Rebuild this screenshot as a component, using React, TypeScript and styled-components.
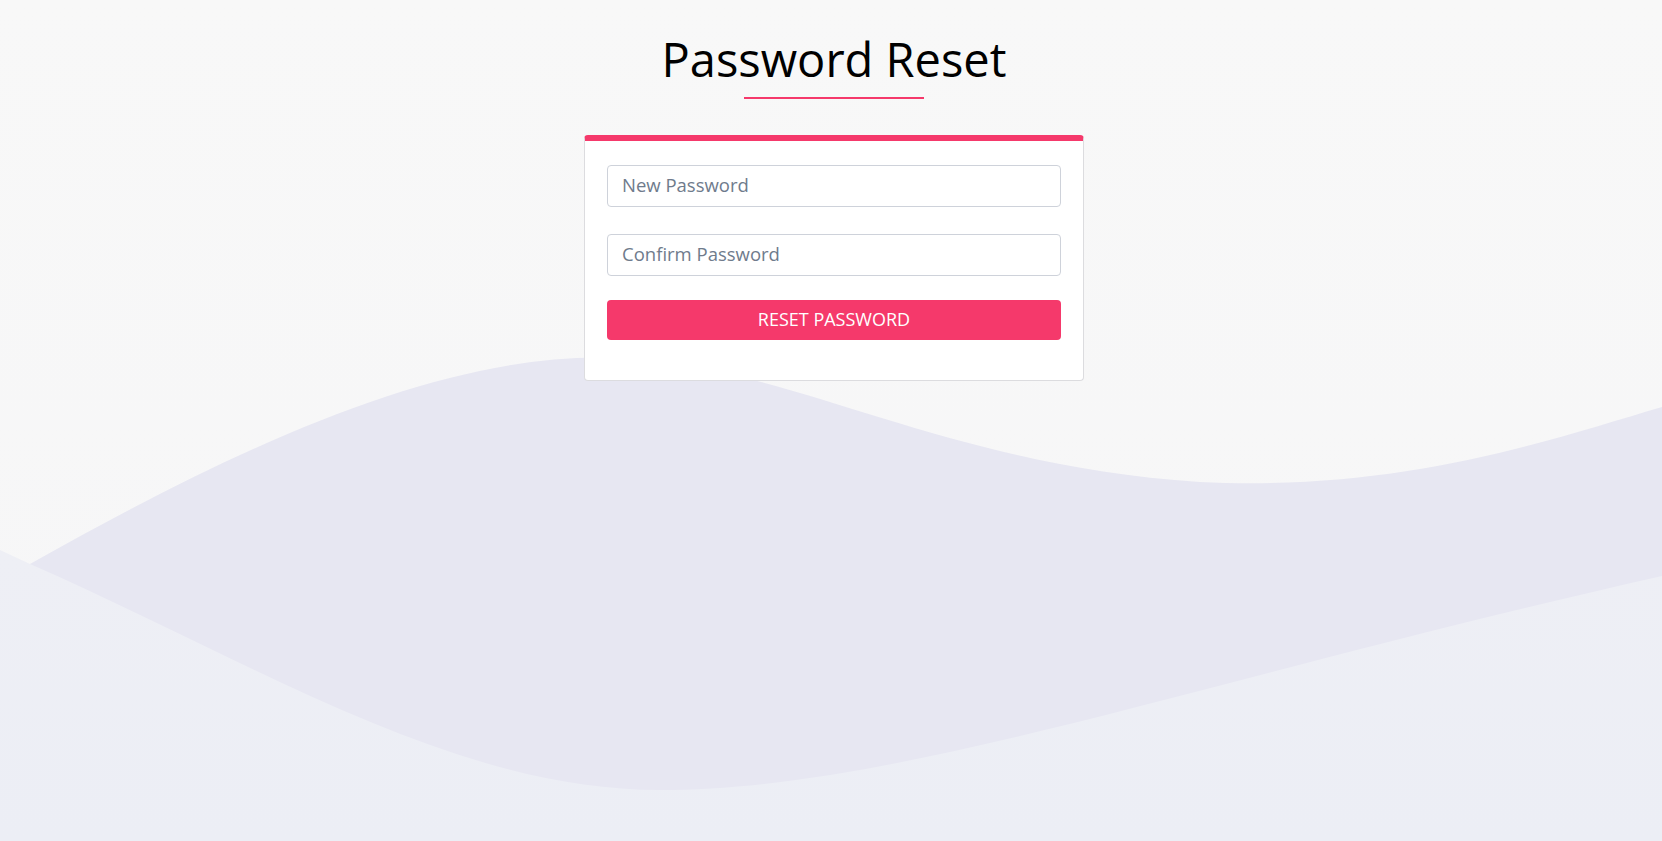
import React from "react";
import styled, { createGlobalStyle } from "styled-components";

const GlobalStyle = createGlobalStyle`
  html, body {
    margin: 0;
    padding: 0;
    background: #f7f7f7;
  }
  * { box-sizing: border-box; }
  #root { min-height: 100vh; }
`;

const Page = styled.div`
  position: relative;
  min-height: 100vh;
  overflow: hidden;
  font-family: "Open Sans", "Liberation Sans", sans-serif;
`;

const Backdrop = styled.svg`
  position: absolute;
  inset: 0;
  width: 100%;
  height: 100%;
  z-index: 0;
`;

const Content = styled.main`
  position: relative;
  z-index: 1;
  display: flex;
  flex-direction: column;
  align-items: center;
  padding-left: 6px;
`;

const TitleBlock = styled.div`
  display: flex;
  flex-direction: column;
  align-items: center;
  margin-top: 36px;
`;

const Title = styled.h1`
  margin: 0;
  font-family: "Open Sans", "Liberation Sans", sans-serif;
  font-size: 47px;
  font-weight: 400;
  line-height: 1;
  color: #000;
`;

const Underline = styled.span`
  display: block;
  width: 180px;
  height: 2px;
  margin-top: 14px;
  background: #f5396b;
`;

const Card = styled.form`
  width: 500px;
  margin-top: 36px;
  background: #fff;
  border: 1px solid #dcdcdf;
  border-top: 6px solid #f5396b;
  border-radius: 4px;
  padding: 24px 22px 40px;
  display: flex;
  flex-direction: column;
`;

const Field = styled.input<{ $gap: number }>`
  width: 100%;
  height: 42px;
  margin-bottom: ${(p) => p.$gap}px;
  padding: 0 14px 3px;
  border: 1px solid #ced2da;
  border-radius: 4px;
  background: #fff;
  font-family: "Open Sans", "Liberation Sans", sans-serif;
  font-size: 18.5px;
  font-weight: 400;
  color: #333;
  outline: none;
  &::placeholder {
    color: #6f7b8c;
  }
`;

const Button = styled.button`
  width: 100%;
  height: 40px;
  padding: 0 0 2px;
  border: none;
  border-radius: 4px;
  background: #f5396b;
  color: #fff;
  font-family: "Open Sans", "Liberation Sans", sans-serif;
  font-size: 18px;
  font-weight: 400;
  cursor: pointer;
`;

export default function App() {
  return (
    <>
      <GlobalStyle />
      <Page>
        <Backdrop viewBox="0 0 1662 841" preserveAspectRatio="none" aria-hidden="true">
          <defs>
            <linearGradient id="topg" x1="0" y1="0" x2="0" y2="1">
              <stop offset="0" stopColor="#f8f8f8" />
              <stop offset="1" stopColor="#f6f6f7" />
            </linearGradient>
            <linearGradient id="botg" x1="0" y1="0" x2="0" y2="1">
              <stop offset="0" stopColor="#eeeff5" />
              <stop offset="1" stopColor="#eceef5" />
            </linearGradient>
          </defs>
          <rect x="0" y="0" width="1662" height="841" fill="url(#topg)" />
          <path
            d="M0,590 L30,564 C250,440 450,350 620,358 C790,365 940,465 1200,482 C1400,492 1550,440 1662,407 L1662,841 L0,841 Z"
            fill="#e7e7f2"
          />
          <path
            d="M0,550 L30,564 C250,660 450,790 660,790 C900,790 1200,680 1662,576 L1662,841 L0,841 Z"
            fill="url(#botg)"
          />
        </Backdrop>
        <Content>
          <TitleBlock>
            <Title>Password Reset</Title>
            <Underline />
          </TitleBlock>
          <Card onSubmit={(e) => e.preventDefault()}>
            <Field $gap={27} type="password" placeholder="New Password" />
            <Field $gap={24} type="password" placeholder="Confirm Password" />
            <Button type="submit">RESET PASSWORD</Button>
          </Card>
        </Content>
      </Page>
    </>
  );
}
